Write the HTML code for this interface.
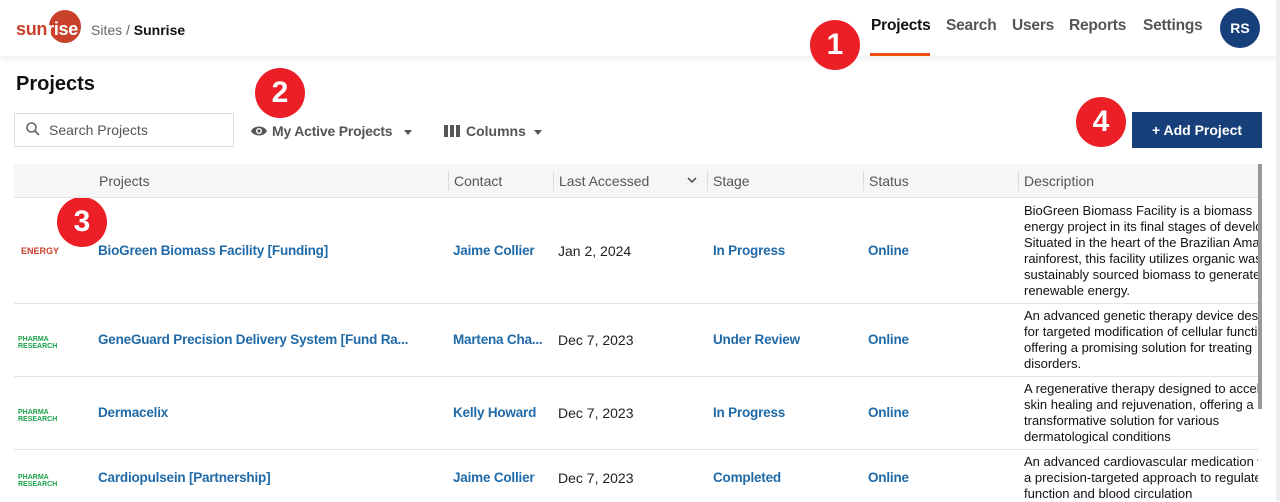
<!DOCTYPE html>
<html><head><meta charset="utf-8"><style>
*{margin:0;padding:0;box-sizing:border-box}
body{width:1280px;height:501px;overflow:hidden;background:#fff;font-family:"Liberation Sans",sans-serif;color:#222;position:relative}
.a{position:absolute;white-space:nowrap}
.hdr{position:absolute;left:0;top:0;width:1280px;height:56px;background:#fff;box-shadow:0 2px 8px rgba(0,0,0,.08)}
.nav{font-size:15.5px;font-weight:bold;color:#555;top:17px;letter-spacing:-.2px}
.badge{position:absolute;width:50px;height:50px;border-radius:50%;background:#ec1f27;color:#fff;font-weight:bold;font-size:30px;text-align:center;line-height:50px}
.th{font-size:14px;color:#555;top:173px}
.dv{position:absolute;top:171px;width:1px;height:20px;background:#ddd}
.lnk{color:#1f6aa8;font-weight:bold;font-size:13.5px;letter-spacing:-.2px}
.txt{font-size:14px;color:#222}
.desc{font-size:13px;line-height:16px;color:#111;left:1024px;width:234px;overflow:hidden}
.row{position:absolute;left:14px;width:1244px;height:1px;background:#e4e4e4}
.ph{font-size:7px;font-weight:bold;color:#1aa34a;line-height:7px;left:18px}
</style></head><body>
<div class="hdr"></div>
<div class="a" style="left:16px;top:16px;width:65px;height:28px">
 <div style="position:absolute;left:33px;top:-6px;width:32px;height:33px;border-radius:50%;background:#c9402b"></div>
 <div class="a" style="left:0;top:3px;font-size:18px;font-weight:bold;color:#c9402b;letter-spacing:-.3px">sun<span style="color:#fff">rise</span></div>
</div>
<div class="a" style="left:91px;top:22px;font-size:14px;color:#666">Sites / <b style="color:#111">Sunrise</b></div>
<div class="a nav" style="left:871px;color:#111">Projects</div>
<div class="a" style="left:870px;top:53px;width:60px;height:3px;background:#f04e12"></div>
<div class="a nav" style="left:946px">Search</div>
<div class="a nav" style="left:1012px">Users</div>
<div class="a nav" style="left:1069px">Reports</div>
<div class="a nav" style="left:1143px">Settings</div>
<div class="a" style="left:1220px;top:8px;width:40px;height:40px;border-radius:50%;background:#173f7a;color:#fff;font-weight:bold;font-size:14px;text-align:center;line-height:40px">RS</div>
<div class="badge" style="left:810px;top:20px">1</div>
<div class="badge" style="left:255px;top:68px">2</div>
<div class="badge" style="left:57px;top:197px">3</div>
<div class="badge" style="left:1076px;top:97px">4</div>

<div class="a" style="left:16px;top:73px;font-size:20px;font-weight:bold;color:#111">Projects</div>
<div class="a" style="left:14px;top:113px;width:220px;height:34px;border:1px solid #ddd"></div>
<svg class="a" style="left:25px;top:121px" width="16" height="16" viewBox="0 0 16 16"><circle cx="6.5" cy="6.5" r="4.5" fill="none" stroke="#666" stroke-width="1.6"/><path d="M10 10l4 4" stroke="#666" stroke-width="1.8"/></svg>
<div class="a" style="left:49px;top:122px;font-size:14px;color:#555">Search Projects</div>
<svg class="a" style="left:251px;top:125px" width="16" height="12" viewBox="0 0 16 12"><path d="M0 6C3 0 13 0 16 6C13 12 3 12 0 6Z" fill="#555"/><circle cx="8" cy="6" r="3" fill="#fff"/><circle cx="8" cy="6" r="1.6" fill="#555"/></svg>
<div class="a" style="left:272px;top:123px;font-size:14px;font-weight:bold;color:#555;letter-spacing:-.2px">My Active Projects</div>
<div class="a" style="left:404px;top:130px;border:4px solid transparent;border-top:5px solid #555;border-bottom:0"></div>
<svg class="a" style="left:444px;top:125px" width="16" height="12"><rect x="0" y="0" width="4" height="12" fill="#555"/><rect x="6" y="0" width="4" height="12" fill="#555"/><rect x="12" y="0" width="4" height="12" fill="#555"/></svg>
<div class="a" style="left:466px;top:123px;font-size:14px;font-weight:bold;color:#555">Columns</div>
<div class="a" style="left:534px;top:130px;border:4px solid transparent;border-top:5px solid #555;border-bottom:0"></div>
<div class="a" style="left:1132px;top:112px;width:130px;height:36px;background:#173f7a;color:#fff;font-weight:bold;font-size:14px;text-align:center;line-height:36px">+ Add Project</div>

<div class="a" style="left:14px;top:164px;width:1244px;height:34px;background:#f6f6f6;border-bottom:1px solid #e4e4e4"></div>
<div class="a th" style="left:99px">Projects</div>
<div class="dv" style="left:448px"></div><div class="a th" style="left:454px">Contact</div>
<div class="dv" style="left:553px"></div><div class="a th" style="left:559px">Last Accessed</div>
<svg class="a" style="left:687px;top:177px" width="10" height="7"><path d="M1 1l4 4 4-4" fill="none" stroke="#444" stroke-width="1.5"/></svg>
<div class="dv" style="left:707px"></div><div class="a th" style="left:713px">Stage</div>
<div class="dv" style="left:863px"></div><div class="a th" style="left:869px">Status</div>
<div class="dv" style="left:1018px"></div><div class="a th" style="left:1024px">Description</div>

<div class="a" style="left:21px;top:246px;font-size:9px;font-weight:bold;color:#c9402b">ENERGY</div>
<div class="a lnk" style="left:98px;top:243px">BioGreen Biomass Facility [Funding]</div>
<div class="a lnk" style="left:453px;top:243px">Jaime Collier</div>
<div class="a txt" style="left:558px;top:243px">Jan 2, 2024</div>
<div class="a lnk" style="left:713px;top:243px">In Progress</div>
<div class="a lnk" style="left:868px;top:243px">Online</div>
<div class="a desc" style="top:203px">BioGreen Biomass Facility is a biomass<br>energy project in its final stages of development.<br>Situated in the heart of the Brazilian Amazon<br>rainforest, this facility utilizes organic waste and<br>sustainably sourced biomass to generate<br>renewable energy.</div>
<div class="row" style="top:303px"></div>

<div class="a ph" style="top:336px">PHARMA<br>RESEARCH</div>
<div class="a lnk" style="left:98px;top:332px">GeneGuard Precision Delivery System [Fund Ra...</div>
<div class="a lnk" style="left:453px;top:332px">Martena Cha...</div>
<div class="a txt" style="left:558px;top:332px">Dec 7, 2023</div>
<div class="a lnk" style="left:713px;top:332px">Under Review</div>
<div class="a lnk" style="left:868px;top:332px">Online</div>
<div class="a desc" style="top:308px">An advanced genetic therapy device designed<br>for targeted modification of cellular functions,<br>offering a promising solution for treating<br>disorders.</div>
<div class="row" style="top:376px"></div>

<div class="a ph" style="top:409px">PHARMA<br>RESEARCH</div>
<div class="a lnk" style="left:98px;top:405px">Dermacelix</div>
<div class="a lnk" style="left:453px;top:405px">Kelly Howard</div>
<div class="a txt" style="left:558px;top:405px">Dec 7, 2023</div>
<div class="a lnk" style="left:713px;top:405px">In Progress</div>
<div class="a lnk" style="left:868px;top:405px">Online</div>
<div class="a desc" style="top:381px">A regenerative therapy designed to accelerate<br>skin healing and rejuvenation, offering a<br>transformative solution for various<br>dermatological conditions</div>
<div class="row" style="top:449px"></div>

<div class="a ph" style="top:474px">PHARMA<br>RESEARCH</div>
<div class="a lnk" style="left:98px;top:470px">Cardiopulsein [Partnership]</div>
<div class="a lnk" style="left:453px;top:470px">Jaime Collier</div>
<div class="a txt" style="left:558px;top:470px">Dec 7, 2023</div>
<div class="a lnk" style="left:713px;top:470px">Completed</div>
<div class="a lnk" style="left:868px;top:470px">Online</div>
<div class="a desc" style="top:454px">An advanced cardiovascular medication with<br>a precision-targeted approach to regulate<br>function and blood circulation</div>

<div class="a" style="left:1258px;top:164px;width:4px;height:245px;background:#999"></div>
<div class="a" style="left:1276px;top:0;width:4px;height:501px;background:#eee"></div>
</body></html>
